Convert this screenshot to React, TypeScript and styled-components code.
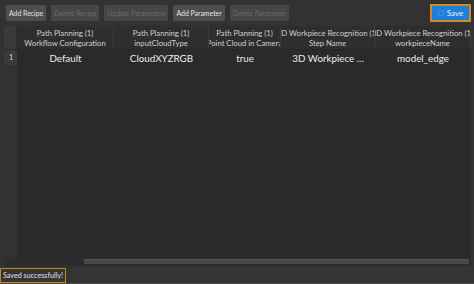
import { FC } from "react";
import styled, { createGlobalStyle } from "styled-components";

const GlobalStyle = createGlobalStyle`
  html, body {
    margin: 0;
    padding: 0;
    background: #323232;
  }
  * {
    box-sizing: border-box;
  }
`;

const Window = styled.div`
  width: 474px;
  height: 284px;
  display: flex;
  flex-direction: column;
  background: #323232;
  font-family: Lato, "Noto Sans", sans-serif;
  color: #e0e0e0;
  overflow: hidden;
`;

const Toolbar = styled.div`
  height: 26px;
  display: flex;
  align-items: center;
  gap: 5px;
  padding: 0 3px 0 6px;
`;

const ToolButton = styled.button<{ disabled?: boolean }>`
  height: 16px;
  padding: 0 3px;
  border: none;
  border-radius: 1px;
  background: ${({ disabled }) => (disabled ? "#464646" : "#4e4e4e")};
  color: ${({ disabled }) => (disabled ? "#6a6a6a" : "#e2e2e2")};
  font-family: inherit;
  font-size: 6.9px;
  line-height: 16px;
  white-space: nowrap;
`;

const Spacer = styled.div`
  flex: 1;
`;

const SaveButton = styled.button`
  height: 18px;
  width: 41px;
  margin-top: -1px;
  border: 2px solid #d08a24;
  background: #1f80dc;
  color: #eef4fb;
  font-family: inherit;
  font-size: 8px;
  display: flex;
  align-items: center;
  justify-content: center;
  gap: 3px;
  padding: 0;
`;

const TableFrame = styled.div`
  flex: 1;
  display: flex;
  flex-direction: column;
  margin: 0 3px 0 4px;
  background: #2a2a2a;
`;

const HeaderRow = styled.div`
  display: flex;
  height: 24px;
  background: #2e2e2e;
  border-bottom: 1px solid #262626;
`;

const Corner = styled.div`
  width: 14px;
  background: #3a3a3a;
  border-right: 1px solid #2a2a2a;
`;

const HeaderCell = styled.div<{ w: number }>`
  width: ${({ w }) => w}px;
  flex-shrink: 0;
  display: flex;
  flex-direction: column;
  align-items: center;
  justify-content: center;
  overflow: hidden;
  border-right: 1px solid #3c3c3c;
  font-size: 7.7px;
  line-height: 10px;
  color: #cfcfcf;
  white-space: nowrap;
`;

const Body = styled.div`
  flex: 1;
  display: flex;
  flex-direction: column;
`;

const DataRow = styled.div`
  display: flex;
  height: 15px;
`;

const RowHead = styled.div`
  width: 14px;
  background: #3a3a3a;
  font-size: 7.5px;
  color: #d8d8d8;
  display: flex;
  align-items: center;
  padding-left: 5px;
`;

const Cell = styled.div<{ w: number }>`
  width: ${({ w }) => w}px;
  flex-shrink: 0;
  display: flex;
  align-items: center;
  justify-content: center;
  overflow: hidden;
  white-space: nowrap;
  font-size: 9.8px;
  color: #ececec;
`;

const EmptyArea = styled.div`
  flex: 1;
  display: flex;
`;

const SideStrip = styled.div`
  width: 18px;
  margin-left: -4px;
  background: #323232;
`;

const ScrollRow = styled.div`
  height: 9px;
  display: flex;
  align-items: center;
  padding-left: 80px;
  padding-right: 2px;
  background: #2c2c2c;
`;

const ScrollHandle = styled.div`
  flex: 1;
  height: 5px;
  background: #484848;
  border-top: 1px solid #525252;
`;

const StatusBar = styled.div`
  height: 16px;
  display: flex;
  align-items: stretch;
  background: #343434;
  border-bottom: 1px solid #4a4a4a;
  margin-top: 2px;
`;

const StatusMessage = styled.div`
  padding: 0 2px;
  border: 1px solid #c9861f;
  font-size: 7.2px;
  color: #e0e0e0;
  display: flex;
  align-items: center;
  white-space: nowrap;
`;

interface IColumn {
  w: number;
  top: string;
  bottom: string;
  value: string;
}

const columns: IColumn[] = [
  { w: 97, top: "Path Planning (1)", bottom: "Workflow Configuration", value: "Default" },
  { w: 95, top: "Path Planning (1)", bottom: "inputCloudType", value: "CloudXYZRGB" },
  { w: 72, top: "Path Planning (1)", bottom: "Point Cloud in Camera", value: "true" },
  { w: 94, top: "3D Workpiece Recognition (1)", bottom: "Step Name", value: "3D Workpiece ..." },
  { w: 96, top: "3D Workpiece Recognition (1)", bottom: "workpieceName", value: "model_edge" },
];

const App: FC = () => {
  return (
    <Window>
      <GlobalStyle />
      <Toolbar>
        <ToolButton>Add Recipe</ToolButton>
        <ToolButton disabled>Delete Recipe</ToolButton>
        <ToolButton disabled>Update Parameters</ToolButton>
        <ToolButton>Add Parameter</ToolButton>
        <ToolButton disabled>Delete Parameter</ToolButton>
        <Spacer />
        <SaveButton>
          <svg width="6" height="6" viewBox="0 0 6 6">
            <rect x="0.5" y="0.5" width="5" height="5" fill="none" stroke="#3a8fe0" strokeWidth="1" />
          </svg>
          Save
        </SaveButton>
      </Toolbar>
      <TableFrame>
        <HeaderRow>
          <Corner />
          {columns.map((c, i) => (
            <HeaderCell key={i} w={c.w}>
              <span>{c.top}</span>
              <span>{c.bottom}</span>
            </HeaderCell>
          ))}
        </HeaderRow>
        <Body>
          <DataRow>
            <RowHead>1</RowHead>
            {columns.map((c, i) => (
              <Cell key={i} w={c.w}>
                {c.value}
              </Cell>
            ))}
          </DataRow>
          <EmptyArea>
            <SideStrip />
          </EmptyArea>
        </Body>
        <ScrollRow>
          <ScrollHandle />
        </ScrollRow>
      </TableFrame>
      <StatusBar>
        <StatusMessage>Saved successfully!</StatusMessage>
      </StatusBar>
    </Window>
  );
};

export default App;
